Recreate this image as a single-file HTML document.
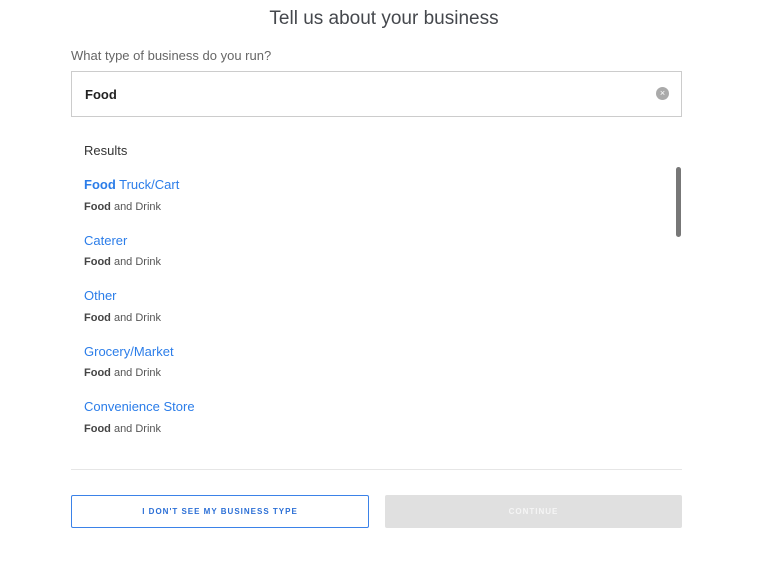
<!DOCTYPE html>
<html><head><style>
body{margin:0;width:768px;height:581px;background:#fff;font-family:"Liberation Sans",sans-serif;position:relative;overflow:hidden}
.a{position:absolute}
.t{left:0;width:768px;text-align:center;top:8px;font-size:19px;color:#45484d}
.lbl{left:71px;top:48px;font-size:13px;color:#666}
.inp{left:71px;top:71px;width:609px;height:44px;border:1px solid #ccc}
.inp b{position:absolute;left:13px;top:15px;font-size:13px;color:#222}
.x{left:656px;top:87px;width:13px;height:13px;border-radius:50%;background:#aaa;color:#fff;font-size:9px;text-align:center;line-height:13px}
.res{left:84px;top:143px;font-size:13px;color:#333}
.it{left:84px;font-size:13px;color:#2b7de9}
.sub{left:84px;font-size:11px;color:#555}
.sub b{color:#444}
.sb{left:676px;top:167px;width:5px;height:70px;background:#777;border-radius:3px}
.hr{left:71px;top:469px;width:611px;height:1px;background:#e6e6e6}
.b1{left:71px;top:495px;width:296px;height:31px;border:1px solid #3b82e8;border-radius:2px;color:#2b6fd6;font-size:8px;font-weight:bold;letter-spacing:1px;text-align:center;line-height:31px}
.b2{left:385px;top:495px;width:297px;height:33px;background:#e0e0e0;border-radius:2px;color:#f5f5f5;font-size:8px;font-weight:bold;letter-spacing:1px;text-align:center;line-height:33px}
</style></head><body>
<div class="a t">Tell us about your business</div>
<div class="a lbl">What type of business do you run?</div>
<div class="a inp"><b>Food</b></div>
<div class="a x">×</div>
<div class="a res">Results</div>
<div class="a it" style="top:177px"><b>Food</b> Truck/Cart</div>
<div class="a sub" style="top:201px"><b>Food</b> and Drink</div>
<div class="a it" style="top:233px">Caterer</div>
<div class="a sub" style="top:256px"><b>Food</b> and Drink</div>
<div class="a it" style="top:288px">Other</div>
<div class="a sub" style="top:312px"><b>Food</b> and Drink</div>
<div class="a it" style="top:344px">Grocery/Market</div>
<div class="a sub" style="top:367px"><b>Food</b> and Drink</div>
<div class="a it" style="top:399px">Convenience Store</div>
<div class="a sub" style="top:423px"><b>Food</b> and Drink</div>
<div class="a sb"></div>
<div class="a hr"></div>
<div class="a b1">I DON'T SEE MY BUSINESS TYPE</div>
<div class="a b2">CONTINUE</div>
</body></html>
